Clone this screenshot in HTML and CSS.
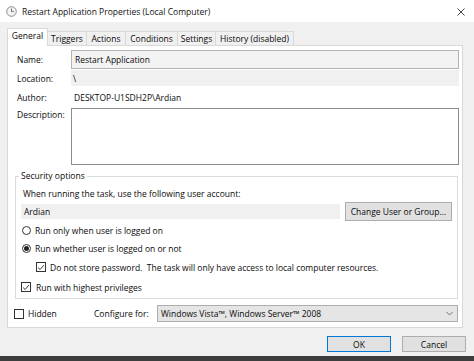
FILE: index.html
```html
<!DOCTYPE html>
<html>
<head>
<meta charset="utf-8">
<link rel="stylesheet" href="styles.css">
</head>
<body>
<div class="window">
  <div class="titlebar">
    <svg class="app-icon" width="11" height="11" viewBox="0 0 11 11">
      <circle cx="5.5" cy="5.5" r="4.8" fill="#f4f4f4" stroke="#8a8a8a" stroke-width="1"/>
      <path d="M5.5 2.6 V5.6 H7.8" fill="none" stroke="#6d6d6d" stroke-width="1"/>
    </svg>
    <span class="title">Restart Application Properties (Local Computer)</span>
    <svg class="close" width="8" height="8" viewBox="0 0 8 8">
      <path d="M0.5 0.5 L7.5 7.5 M7.5 0.5 L0.5 7.5" stroke="#333" stroke-width="0.9"/>
    </svg>
  </div>

  <div class="tabs">
    <div class="tab active t-general">General</div>
    <div class="tab t-triggers">Triggers</div>
    <div class="tab t-actions">Actions</div>
    <div class="tab t-conditions">Conditions</div>
    <div class="tab t-settings">Settings</div>
    <div class="tab t-history">History (disabled)</div>
  </div>

  <div class="panel">
    <div class="row row-name">
      <span class="label">Name:</span>
      <div class="input input-name">Restart Application</div>
    </div>
    <div class="row row-location">
      <span class="label">Location:</span>
      <div class="input input-readonly">\</div>
    </div>
    <div class="row row-author">
      <span class="label">Author:</span>
      <div class="plain">DESKTOP-U1SDH2P\Ardian</div>
    </div>
    <div class="row row-desc">
      <span class="label">Description:</span>
      <div class="textarea"></div>
    </div>

    <fieldset class="group">
      <legend>Security options</legend>
      <div class="account-text">When running the task, use the following user account:</div>
      <div class="account-row">
        <div class="account-field">Ardian</div>
        <div class="btn btn-change">Change User or Group...</div>
      </div>
      <div class="opt opt-radio1">
        <span class="radio"></span>
        <span>Run only when user is logged on</span>
      </div>
      <div class="opt opt-radio2">
        <span class="radio checked"></span>
        <span>Run whether user is logged on or not</span>
      </div>
      <div class="opt opt-nostore">
        <span class="check checked">
          <svg width="9" height="9" viewBox="0 0 9 9"><path d="M1.3 4.6 L3.5 6.8 L7.8 1.8" fill="none" stroke="#222" stroke-width="1"/></svg>
        </span>
        <span>Do not store password.&nbsp; The task will only have access to local computer resources.</span>
      </div>
      <div class="opt opt-highest">
        <span class="check checked">
          <svg width="9" height="9" viewBox="0 0 9 9"><path d="M1.3 4.6 L3.5 6.8 L7.8 1.8" fill="none" stroke="#222" stroke-width="1"/></svg>
        </span>
        <span>Run with highest privileges</span>
      </div>
    </fieldset>

    <div class="bottom-row">
      <div class="hidden-opt">
        <span class="check"></span>
        <span>Hidden</span>
      </div>
      <span class="config-label">Configure for:</span>
      <div class="select">
        <span>Windows Vista™, Windows Server™ 2008</span>
        <svg class="chev" width="7" height="5" viewBox="0 0 7 5"><path d="M0.5 1 L3.5 4 L6.5 1" fill="none" stroke="#666" stroke-width="0.9"/></svg>
      </div>
    </div>
  </div>

  <div class="footer">
    <div class="btn btn-ok">OK</div>
    <div class="btn btn-cancel">Cancel</div>
  </div>
</div>
</body>
</html>
```

FILE: styles.css
```css
* { box-sizing: border-box; }
html, body { margin: 0; padding: 0; }
html { background: #3c3c3c; }
body {
  width: 474px;
  height: 356px;
  overflow: hidden;
  background: #f0f0f0;
  font-family: "Open Sans", "Noto Sans", sans-serif;
  font-size: 8.5px;
  color: #0a0a0a;
}
.window {
  width: 474px;
  height: 356px;
  display: flex;
  flex-direction: column;
}
.window > * { flex-shrink: 0; }
.titlebar {
  height: 22px;
  background: #fff;
  display: flex;
  align-items: center;
  padding-left: 6px;
  padding-right: 9px;
}
.app-icon { margin-right: 5px; }
.title { flex: 1; color: #111; }
.close { margin-top: 2px; }

.tabs {
  display: flex;
  align-items: flex-end;
  height: 24px;
  padding-left: 7px;
  margin-bottom: -1px;
}
.tab {
  height: 15px;
  border: 1px solid #d9d9d9;
  border-bottom: none;
  margin-left: -1px;
  background: #f0f0f0;
  display: flex;
  align-items: center;
  justify-content: center;
  line-height: 1;
}
.tab.active {
  height: 18px;
  background: #fff;
  position: relative;
  z-index: 1;
  margin-left: 0;
  padding-bottom: 2px;
}
.t-general { width: 41px; }
.t-triggers { width: 40px; }
.t-actions { width: 40px; }
.t-conditions { width: 53px; }
.t-settings { width: 39px; }
.t-history { width: 79px; }

.panel {
  margin-left: 7px;
  width: 456px;
  height: 283px;
  background: #fff;
  border: 1px solid #d9d9d9;
  padding: 4px 3px 0 9px;
}
.row {
  display: grid;
  grid-template-columns: 54px 1fr;
  align-items: center;
}
.row-name { height: 19px; }
.row-location { height: 16px; margin-top: 1px; }
.row-author { height: 18px; margin-top: 2px; }
.row-desc { height: 57px; margin-top: 2px; align-items: start; }
.row-desc .label { line-height: 14px; }
.input {
  height: 100%;
  display: flex;
  align-items: center;
  padding-left: 3px;
}
.input-name {
  background: #f3f3f3;
  border: 1px solid #b4b4b4;
}
.input-readonly {
  background: #f0f0f0;
  padding-left: 2px;
}
.plain { padding-left: 3px; }
.textarea {
  height: 57px;
  border: 1px solid #8c8c8c;
  background: #fff;
}

.group {
  margin: 5px 1px 0 -2px;
  padding: 0 5px 2px 3px;
  border: 1px solid #dcdcdc;
  min-width: 0;
}
.group legend {
  padding: 0 2px;
  line-height: 12px;
  height: 12px;
}
.account-text {
  margin-top: 5px;
  line-height: 14px;
  padding-left: 4px;
}
.account-row {
  margin-top: 1px;
  height: 19px;
  display: flex;
  align-items: center;
}
.account-field {
  margin-left: 2px;
  width: 319px;
  height: 15px;
  background: #f0f0f0;
  display: flex;
  align-items: center;
  padding-left: 3px;
}
.btn {
  display: flex;
  align-items: center;
  justify-content: center;
  background: #e1e1e1;
  border: 1px solid #adadad;
}
.btn-change {
  margin-left: auto;
  width: 107px;
  height: 19px;
}
.opt {
  height: 18px;
  display: flex;
  align-items: center;
}
.opt-radio1 { margin-left: 3px; }
.opt-radio2 { margin-left: 3px; }
.opt-nostore { margin-left: 17px; margin-top: 1px; }
.opt-highest { margin-left: 2px; margin-top: 2px; }
.radio {
  width: 9px;
  height: 9px;
  border-radius: 50%;
  border: 1px solid #333;
  margin-right: 4px;
  display: flex;
  align-items: center;
  justify-content: center;
  background: #fff;
}
.radio.checked::after {
  content: "";
  width: 5px;
  height: 5px;
  border-radius: 50%;
  background: #222;
}
.check {
  width: 10px;
  height: 10px;
  border: 1px solid #333;
  background: #fff;
  margin-right: 4px;
  display: flex;
  align-items: center;
  justify-content: center;
}
.opt-highest .check { margin-right: 5px; }

.bottom-row {
  margin-top: 5px;
  height: 19px;
  display: flex;
  align-items: center;
}
.hidden-opt {
  display: flex;
  align-items: center;
  margin-left: -3px;
  width: 80px;
}
.config-label { width: 63px; }
.select {
  flex: 1;
  height: 17px;
  margin-right: 1px;
  background: #e5e5e5;
  border: 1px solid #adadad;
  display: flex;
  align-items: center;
  padding-left: 3px;
  padding-right: 4px;
}
.select span { flex: 1; }

.footer {
  margin-top: 8px;
  height: 16px;
  display: flex;
  justify-content: flex-end;
  gap: 11px;
  padding-right: 8px;
}
.btn-ok, .btn-cancel { width: 64px; height: 16px; }
.btn-ok { border-color: #0078d7; }
```
